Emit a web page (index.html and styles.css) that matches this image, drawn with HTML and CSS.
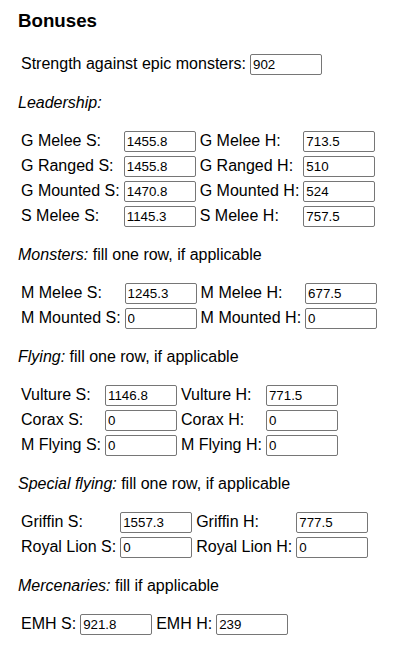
FILE: index.html
```html
<!DOCTYPE html>
<html lang="en">
<head>
<meta charset="utf-8">
<title>Bonuses</title>
<link rel="stylesheet" href="styles.css">
</head>
<body>
<div class="page">
  <h3 class="title">Bonuses</h3>

  <table class="grid">
    <tr><td>Strength against epic monsters:</td><td><input class="field" type="text" value="902"></td></tr>
  </table>

  <p class="note"><i>Leadership:</i></p>
  <table class="grid">
    <tr><td>G Melee S:</td><td><input class="field" type="text" value="1455.8"></td><td>G Melee H:</td><td><input class="field" type="text" value="713.5"></td></tr>
    <tr><td>G Ranged S:</td><td><input class="field" type="text" value="1455.8"></td><td>G Ranged H:</td><td><input class="field" type="text" value="510"></td></tr>
    <tr><td>G Mounted S:</td><td><input class="field" type="text" value="1470.8"></td><td>G Mounted H:</td><td><input class="field" type="text" value="524"></td></tr>
    <tr><td>S Melee S:</td><td><input class="field" type="text" value="1145.3"></td><td>S Melee H:</td><td><input class="field" type="text" value="757.5"></td></tr>
  </table>

  <p class="note"><i>Monsters:</i> fill one row, if applicable</p>
  <table class="grid">
    <tr><td>M Melee S:</td><td><input class="field" type="text" value="1245.3"></td><td>M Melee H:</td><td><input class="field" type="text" value="677.5"></td></tr>
    <tr><td>M Mounted S:</td><td><input class="field" type="text" value="0"></td><td>M Mounted H:</td><td><input class="field" type="text" value="0"></td></tr>
  </table>

  <p class="note"><i>Flying:</i> fill one row, if applicable</p>
  <table class="grid">
    <tr><td>Vulture S:</td><td><input class="field" type="text" value="1146.8"></td><td>Vulture H:</td><td><input class="field" type="text" value="771.5"></td></tr>
    <tr><td>Corax S:</td><td><input class="field" type="text" value="0"></td><td>Corax H:</td><td><input class="field" type="text" value="0"></td></tr>
    <tr><td>M Flying S:</td><td><input class="field" type="text" value="0"></td><td>M Flying H:</td><td><input class="field" type="text" value="0"></td></tr>
  </table>

  <p class="note"><i>Special flying:</i> fill one row, if applicable</p>
  <table class="grid">
    <tr><td>Griffin S:</td><td><input class="field" type="text" value="1557.3"></td><td>Griffin H:</td><td><input class="field" type="text" value="777.5"></td></tr>
    <tr><td>Royal Lion S:</td><td><input class="field" type="text" value="0"></td><td>Royal Lion H:</td><td><input class="field" type="text" value="0"></td></tr>
  </table>

  <p class="note"><i>Mercenaries:</i> fill if applicable</p>
  <table class="grid">
    <tr><td>EMH S:</td><td><input class="field" type="text" value="921.8"></td><td>EMH H:</td><td><input class="field" type="text" value="239"></td></tr>
  </table>
</div>
</body>
</html>
```
FILE: styles.css
```css
html, body {
  margin: 0;
  background: #fff;
  color: #000;
  font-family: "Liberation Sans", Arial, sans-serif;
  font-size: 16px;
}

.page {
  padding: 10px 18px;
}

.title {
  margin: 0 0 18.72px;
  font-size: 18.72px;
  font-weight: bold;
}

.note {
  margin: 16px 0;
}

.grid {
  border-collapse: separate;
  border-spacing: 2px;
  margin: 0;
}

.grid td {
  padding: 1px;
  vertical-align: middle;
  white-space: nowrap;
}

.field {
  box-sizing: border-box;
  width: 72px;
  height: 21px;
  padding: 1px 2px;
  font-family: "Liberation Sans", Arial, sans-serif;
  font-size: 13.333px;
  color: #000;
  background: #fff;
  border: 1px solid #767676;
  border-radius: 2px;
  margin: 0;
}
```
